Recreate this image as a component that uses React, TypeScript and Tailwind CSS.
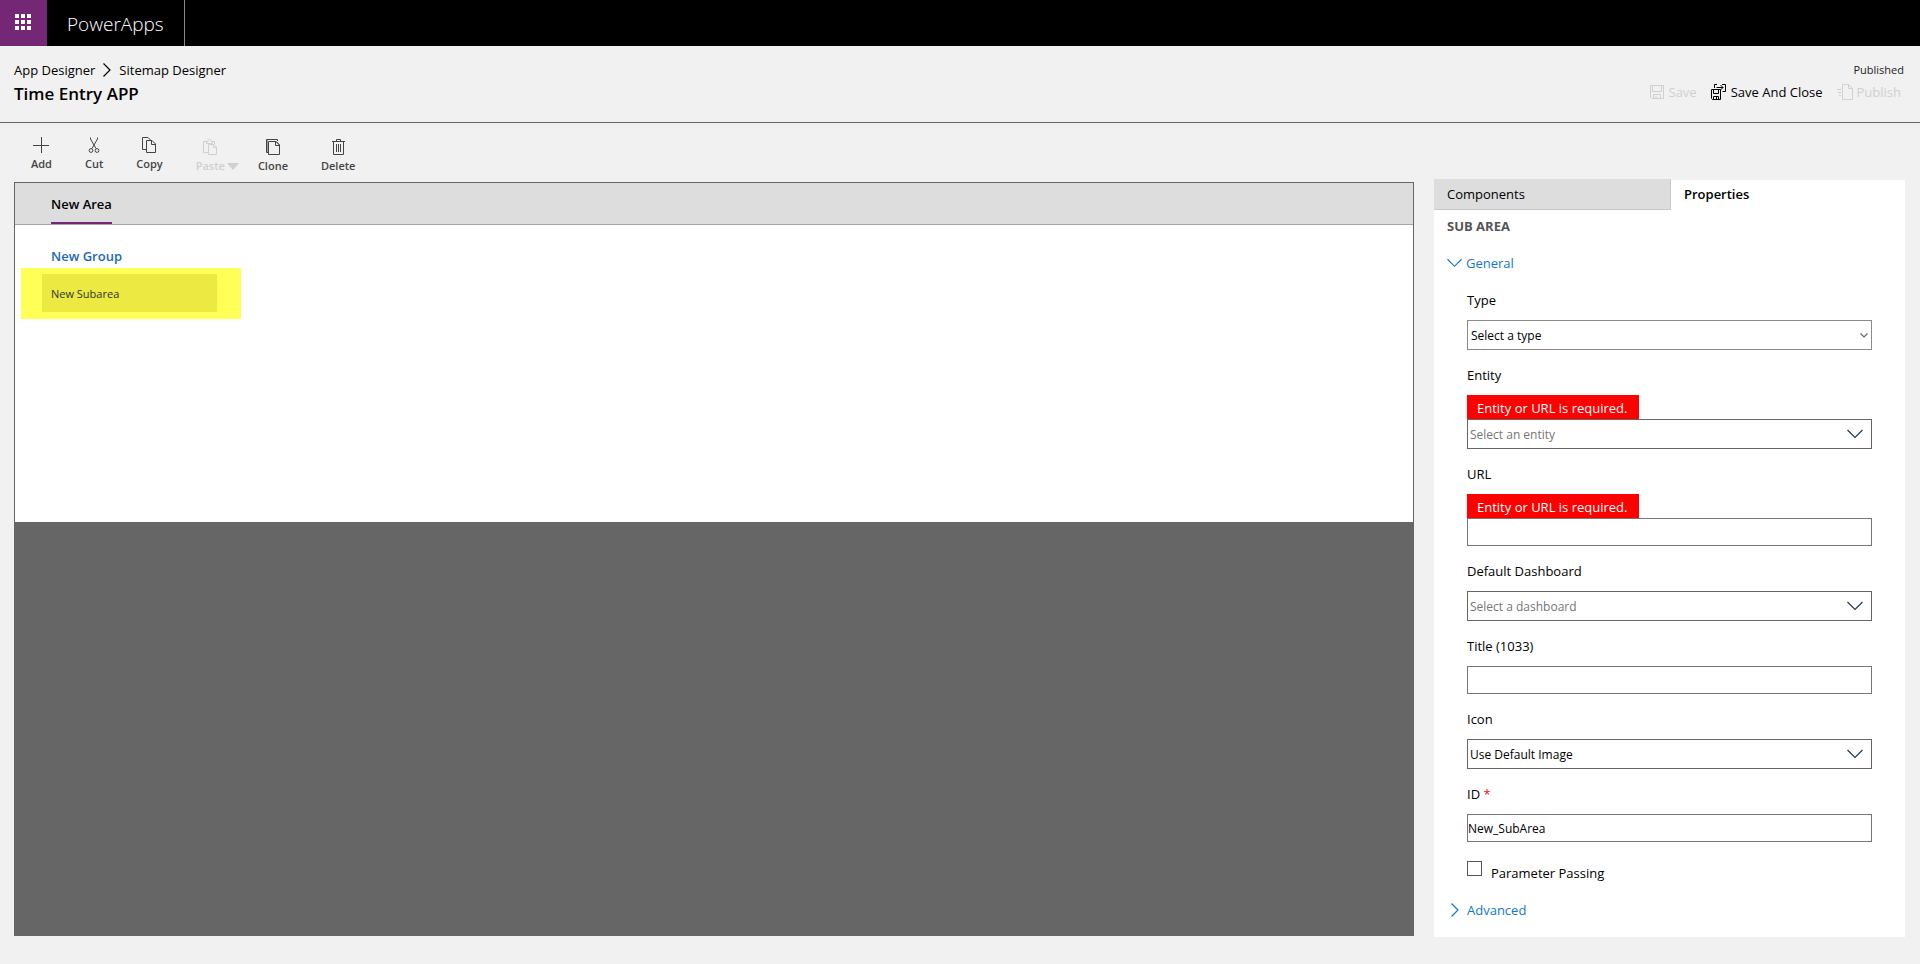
import type { ReactNode } from "react";

type IconProps = { className?: string };

function WaffleIcon() {
  return (
    <svg width="16" height="16" viewBox="0 0 16 16" fill="currentColor" aria-hidden="true">
      {[0, 6, 12].map((y) => [0, 6, 12].map((x) => <rect key={`${x}-${y}`} x={x} y={y} width="4" height="4" />))}
    </svg>
  );
}

function Glyph({ children, size = 16 }: { children: ReactNode; size?: number }) {
  return (
    <svg
      width={size}
      height={size}
      viewBox={`0 0 ${size} ${size}`}
      fill="none"
      stroke="currentColor"
      strokeWidth="1"
      className="shrink-0"
      aria-hidden="true"
    >
      {children}
    </svg>
  );
}

function AddIcon() {
  return (
    <Glyph>
      <path d="M8.5 0V16M0 8.5H16" />
    </Glyph>
  );
}

function CutIcon() {
  return (
    <Glyph>
      <path d="M4.5 0.5V2L10 11.5M11.5 0.5V2L6 11.5" />
      <circle cx="5" cy="13.5" r="1.9" />
      <circle cx="11" cy="13.5" r="1.9" />
    </Glyph>
  );
}

function CopyIcon() {
  return (
    <Glyph>
      <path d="M5 12.5H1.5V0.5H7L9.5 3" />
      <path d="M5.5 3.5H11L14.5 7V15.5H5.5ZM10.5 3.5V7.5H14.5" />
    </Glyph>
  );
}

function PasteIcon() {
  return (
    <Glyph>
      <path d="M6 13.5H1.5V2.5H4.5M10.5 2.5H12.5V5" />
      <path d="M4.5 4.5V2.5H6V1.5C6 0.2 9 0.2 9 1.5V2.5H10.5V4.5Z" />
      <path d="M6.5 15.5V5.5H12L14.5 8V15.5ZM11.5 5.5V8.5H14.5" />
    </Glyph>
  );
}

function CloneIcon() {
  return (
    <Glyph>
      <path d="M3.5 13.5H1.5V0.5H12.5V2" />
      <path d="M2.5 1V13" strokeOpacity="0.5" />
      <path d="M3.5 2.5H11L14.5 6V15.5H3.5ZM10.5 2.5V6.5H14.5M11 2.5L14.5 6" />
    </Glyph>
  );
}

function DeleteIcon() {
  return (
    <Glyph>
      <path d="M2 2.5H15M6.5 2.5V0.5H10.5V2.5M3.5 2.5V15.5H13.5V2.5" />
      <path d="M6.5 5V13M8.5 5V13M10.5 5V13" />
    </Glyph>
  );
}

function SaveIcon() {
  return (
    <Glyph>
      <path d="M1.5 1.5H14.5V14.5H3L1.5 13ZM3.5 1.5V7.5H12.5V1.5M4.5 14.5V10.5H11.5V14.5M7 12V14.5" />
    </Glyph>
  );
}

function SaveCloseIcon() {
  return (
    <Glyph>
      <path d="M0.5 5.5H9.5V15.5H1.5L0.5 14.5ZM2.5 5.5V9.5H7.5V5.5M2.5 15.5V12.5H7.5V15.5M5.5 13V15.5" />
      <path d="M3.5 4V0.5H6M11 0.5H14.5V7.5H11.5M5.5 3.5H12M9.5 1L12 3.5L9.5 6" />
    </Glyph>
  );
}

function PublishIcon() {
  return (
    <Glyph>
      <path d="M5.5 15.5V0.5H11.5L15.5 4.5V15.5ZM11.5 0.5V4.5H15.5M0 5.5H4M1 8.5H4M2 11.5H4" />
    </Glyph>
  );
}

function ChevronDown({ className }: IconProps) {
  return (
    <svg width="16" height="10" viewBox="0 0 16 10" fill="none" stroke="currentColor" strokeWidth="1.2" className={className} aria-hidden="true">
      <path d="M0.5 1L8 8.5L15.5 1" />
    </svg>
  );
}

function SmallChevronDown({ className }: IconProps) {
  return (
    <svg width="8" height="5" viewBox="0 0 8 5" fill="none" stroke="currentColor" strokeWidth="1.2" className={className} aria-hidden="true">
      <path d="M0.5 0.5L4 4L7.5 0.5" />
    </svg>
  );
}

function ChevronRight({ className }: IconProps) {
  return (
    <svg width="8" height="14" viewBox="0 0 8 14" fill="none" stroke="currentColor" strokeWidth="1.2" className={className} aria-hidden="true">
      <path d="M0.5 0.5L7 7L0.5 13.5" />
    </svg>
  );
}

function ToolButton({ icon, label, low, disabled, menu }: { icon: ReactNode; label: string; low?: boolean; disabled?: boolean; menu?: boolean }) {
  return (
    <button
      type="button"
      disabled={disabled}
      className={`relative flex flex-col items-center gap-[3px] text-[11px] leading-4 font-semibold ${low ? "mt-0.5" : ""} ${disabled ? "text-[#d0d0d0]" : "text-[#444]"}`}
    >
      {icon}
      <span>{label}</span>
      {menu && (
        <svg width="12" height="7" viewBox="0 0 12 7" fill="currentColor" className="absolute bottom-1 left-full ml-0.5" aria-hidden="true">
          <path d="M0 0H12L6 7Z" />
        </svg>
      )}
    </button>
  );
}

function Field({ id, label, required, error, children }: { id: string; label: string; required?: boolean; error?: string; children: ReactNode }) {
  return (
    <div className="flex flex-col">
      <label htmlFor={id} className="mb-2.5 leading-5">
        {label}
        {required && <span className="leading-none text-[#e81123]"> *</span>}
      </label>
      {error && (
        <p role="alert" className="h-6 self-start bg-[#ff0000] pr-3 pl-2.5 leading-[26px] text-white">
          {error}
        </p>
      )}
      {children}
    </div>
  );
}

function Lookup({ id, value, muted }: { id: string; value: string; muted?: boolean }) {
  return (
    <div className="relative">
      <select
        id={id}
        className={`block h-[30px] w-full appearance-none rounded-none border border-[#666] bg-white px-0.5 pt-0.5 text-[12px] ${muted ? "text-[#767676]" : "text-black"}`}
      >
        <option>{value}</option>
      </select>
      <ChevronDown className="pointer-events-none absolute top-2.5 right-[9px] text-[#1f3a56]" />
    </div>
  );
}

function TextBox({ id, value }: { id: string; value?: string }) {
  return <input id={id} type="text" defaultValue={value} className="h-7 w-full rounded-none border border-[#767676] bg-white text-[12px]" />;
}

export default function App() {
  return (
    <div className="flex min-h-screen flex-col bg-[#f1f1f1] pb-[27px] font-['Open_Sans','Noto_Sans',sans-serif] text-[13px] text-black">
      <header className="flex h-[46px] bg-black text-white">
        <button type="button" aria-label="App launcher" className="flex w-[47px] items-center bg-[#742774] pb-0.5 pl-[15px]">
          <WaffleIcon />
        </button>
        <a href="#" className="flex items-center border-r border-[#8a8a8a] px-5 pt-0.5 text-[19px] font-light">
          PowerApps
        </a>
      </header>

      <section className="flex h-[77px] justify-between border-b border-[#666] pt-3.5 pr-4 pl-3.5">
        <div>
          <nav className="flex items-center gap-2 leading-5">
            <a href="#">App Designer</a>
            <ChevronRight />
            <a href="#">Sitemap Designer</a>
          </nav>
          <h1 className="mt-0.5 text-[17px] leading-6 font-semibold">Time Entry APP</h1>
        </div>
        <div className="flex flex-col items-end">
          <p className="text-[11px] leading-5 text-[#222]">Published</p>
          <div className="mt-0.5 mr-[3px] flex gap-3.5 leading-5">
            <button type="button" disabled className="flex items-center gap-1 text-[#d0d0d0]">
              <SaveIcon />
              Save
            </button>
            <button type="button" className="flex items-center gap-1">
              <SaveCloseIcon />
              Save And Close
            </button>
            <button type="button" disabled className="flex items-center gap-1 text-[#d0d0d0]">
              <PublishIcon />
              Publish
            </button>
          </div>
        </div>
      </section>

      <main className="flex grow gap-5 pr-[15px] pl-3.5">
        <div className="flex min-w-0 flex-1 flex-col pb-px">
          <div role="toolbar" className="flex h-[59px] items-start gap-[33px] pt-3.5 pl-[17px]">
            <ToolButton icon={<AddIcon />} label="Add" />
            <ToolButton icon={<CutIcon />} label="Cut" />
            <ToolButton icon={<CopyIcon />} label="Copy" />
            <ToolButton icon={<PasteIcon />} label="Paste" low disabled menu />
            <ToolButton icon={<CloneIcon />} label="Clone" low />
            <ToolButton icon={<DeleteIcon />} label="Delete" low />
          </div>
          <div className="flex flex-1 flex-col border border-[#666] bg-[#666]">
            <div className="flex h-[42px] border-b border-[#a6a6a6] bg-[#ddd] pl-9">
              <button type="button" className="border-b-2 border-[#742774] pt-1 font-semibold">
                New Area
              </button>
            </div>
            <div className="h-[297px] bg-white pt-[21px]">
              <h2 className="pl-9 leading-5 font-semibold text-[#2266b8]">New Group</h2>
              <div className="mt-0.5 ml-1.5 w-[220px] bg-[#ffff57] pt-1.5 pr-6 pb-[7px] pl-[21px]">
                <button type="button" className="block h-[38px] w-full bg-[#ebe942] pt-0.5 pl-[9px] text-left text-[11px] text-[#333]">
                  New Subarea
                </button>
              </div>
            </div>
          </div>
        </div>

        <aside className="mt-14 flex w-[471px] flex-col bg-white">
          <div role="tablist" className="flex h-[31px]">
            <button type="button" role="tab" aria-selected="false" className="w-[237px] border-r border-b border-[#c8c8c8] bg-[#ddd] pt-0.5 pl-[13px] text-left">
              Components
            </button>
            <button type="button" role="tab" aria-selected="true" className="flex-1 border-t border-[#f1f1f1] bg-white pl-[13px] text-left font-semibold">
              Properties
            </button>
          </div>
          <div className="px-[13px]">
            <h2 className="mt-1.5 leading-5 font-bold text-[#555]">SUB AREA</h2>
            <button type="button" className="mt-[17px] flex items-center gap-1 leading-5 text-[#0f78d0]">
              <ChevronDown className="w-[15px]" />
              General
            </button>
            <div className="mt-[17px] mr-5 ml-5 flex flex-col gap-[15px]">
              <Field id="type" label="Type">
                <div className="relative">
                  <select id="type" className="block h-[30px] w-full appearance-none rounded-none border border-[#8a8a8a] bg-white px-[3px] pt-0.5 text-[12px]">
                    <option>Select a type</option>
                  </select>
                  <SmallChevronDown className="pointer-events-none absolute top-[13px] right-1 text-[#666]" />
                </div>
              </Field>
              <Field id="entity" label="Entity" error="Entity or URL is required.">
                <Lookup id="entity" value="Select an entity" muted />
              </Field>
              <Field id="url" label="URL" error="Entity or URL is required.">
                <TextBox id="url" />
              </Field>
              <Field id="dashboard" label="Default Dashboard">
                <Lookup id="dashboard" value="Select a dashboard" muted />
              </Field>
              <Field id="title" label="Title (1033)">
                <TextBox id="title" />
              </Field>
              <Field id="icon" label="Icon">
                <Lookup id="icon" value="Use Default Image" />
              </Field>
              <Field id="sub-id" label="ID" required>
                <TextBox id="sub-id" value="New_SubArea" />
              </Field>
            </div>
            <div className="mt-[19px] ml-5 flex gap-[9px]">
              <input id="params" type="checkbox" className="size-[15px] appearance-none border border-[#555] bg-white checked:bg-[#555]" />
              <label htmlFor="params" className="pt-0.5 leading-5">
                Parameter Passing
              </label>
            </div>
            <button type="button" className="mt-[17px] mb-[17px] flex items-center gap-2 pl-1 leading-5 text-[#0f78d0]">
              <ChevronRight />
              Advanced
            </button>
          </div>
        </aside>
      </main>
    </div>
  );
}
